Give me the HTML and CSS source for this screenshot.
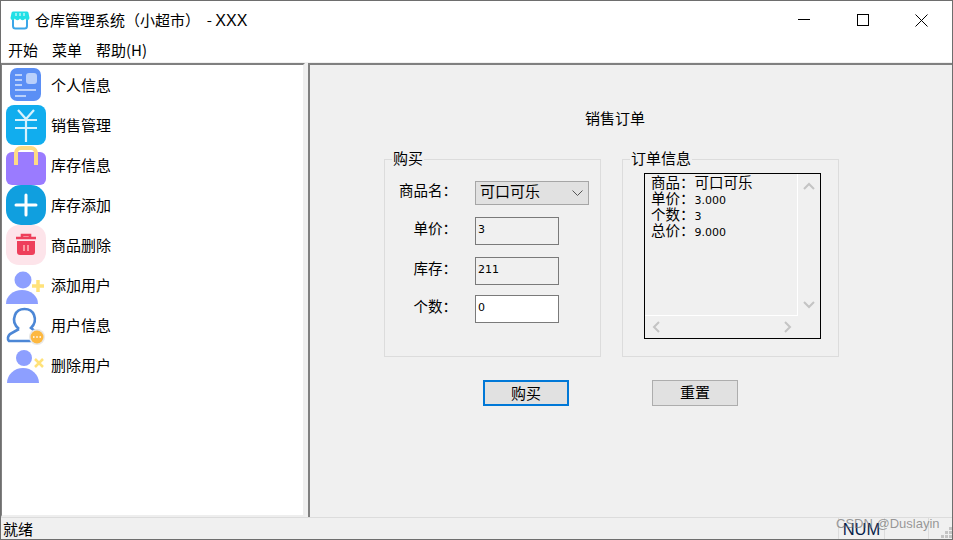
FILE: index.html
```html
<!DOCTYPE html>
<html lang="zh">
<head>
<meta charset="utf-8">
<title>仓库管理系统</title>
<link rel="stylesheet" href="styles.css">
</head>
<body>
<div class="window">
  <header class="titlebar">
    <svg class="app-icon" viewBox="0 0 20 20"><path d="M3 7v9a2.500 2.500 0 0 0 2.500 2.500h9A2.500 2.500 0 0 0 17 16V7" fill="none" stroke="#3aa6e8" stroke-width="2"/><path d="M3 1.500h14a1.500 1.500 0 0 1 1.500 1.500l1 5a2.200 2.200 0 0 1-4.300 .5 2.800 2.800 0 0 1-5.200 0 2.800 2.800 0 0 1-5.200 0A2.200 2.200 0 0 1 .5 8l1-5A1.500 1.500 0 0 1 3 1.500z" fill="#22e0e6"/><path d="M6 3v3M10 3v3M14 3v3" stroke="#fff" stroke-width="1"/></svg>
    <span class="title-text">仓库管理系统（小超市）  - <span class="title-latin">XXX</span></span>
    <div class="controls">
      <span class="ctl"><svg width="12" height="12" viewBox="0 0 12 12"><path d="M0 5.500h12" stroke="#000"/></svg></span>
      <span class="ctl"><svg width="12" height="12" viewBox="0 0 12 12"><rect x=".5" y=".5" width="11" height="11" fill="none" stroke="#000"/></svg></span>
      <span class="ctl"><svg width="13" height="13" viewBox="0 0 13 13"><path d="M.5 .5l12 12M12.500 .5l-12 12" stroke="#000"/></svg></span>
    </div>
  </header>
  <nav class="menubar"><span>开始</span><span>菜单</span><span>帮助(H)</span></nav>
  <main class="main">
    <aside class="sidebar">
      <div class="item"><svg class="ico" viewBox="0 0 40 40"><rect x="4" y="3" width="31" height="33" rx="7" fill="#5b8ff5"/><rect x="20" y="8" width="11" height="11" rx="3" fill="#b9d0fb"/><path d="M9 10h7M9 15h7M9 20h7M9 25h21M9 31h11" stroke="#b9d0fb" stroke-width="2"/></svg><span>个人信息</span></div>
      <div class="item"><svg class="ico" viewBox="0 0 40 40"><rect width="40" height="40" rx="8" fill="#11adee"/><path d="M12 5l8 9 8-9M9 15h22M9 23h22M20 14v23" fill="none" stroke="#d8f2fd" stroke-width="2.200"/></svg><span>销售管理</span></div>
      <div class="item"><svg class="ico" viewBox="0 0 40 40"><rect y="7" width="40" height="33" rx="6" fill="#9a7bff"/><path d="M10 20V8a5 5 0 0 1 5-5h10a5 5 0 0 1 5 5v12" fill="none" stroke="#fddb85" stroke-width="4"/></svg><span>库存信息</span></div>
      <div class="item"><svg class="ico" viewBox="0 0 40 40"><rect width="40" height="40" rx="15" fill="#109fdf"/><path d="M20 10v20M10 20h20" stroke="#fff" stroke-width="3" stroke-linecap="round"/></svg><span>库存添加</span></div>
      <div class="item"><svg class="ico" viewBox="0 0 40 40"><rect width="40" height="40" rx="13" fill="#fde4ea"/><path d="M11 16h18v11a3 3 0 0 1-3 3H14a3 3 0 0 1-3-3z" fill="#ee3f5b"/><path d="M10 13h20M16 12v-2h8v2" fill="none" stroke="#ee3f5b" stroke-width="2.600"/><path d="M18 20v6M22 20v6" stroke="#fbb" stroke-width="1.500"/></svg><span>商品删除</span></div>
      <div class="item"><svg class="ico" viewBox="0 0 40 40"><circle cx="17" cy="15" r="8.500" fill="#8d9fff"/><path d="M0 39a16 14 0 0 1 32 0z" fill="#8d9fff"/><path d="M32 15v12M26 21h12" stroke="#ffe27a" stroke-width="3.500"/></svg><span>添加用户</span></div>
      <div class="item"><svg class="ico" viewBox="0 0 40 40"><path d="M13 24c-5-4-6-9-4-14 3-8 16-8 19 0 2 5 1 9-3 13l5 4M13 24l-9 5c-2 2-3 5-1 7h22" fill="none" stroke="#4c87d6" stroke-width="2.600"/><circle cx="31" cy="32" r="8" fill="#e8e8e8"/><circle cx="31" cy="32" r="6.500" fill="#fdb840"/><path d="M27 32h1.500M30.250 32h1.500M33.500 32H35" stroke="#fff" stroke-width="1.500"/></svg><span>用户信息</span></div>
      <div class="item"><svg class="ico" viewBox="0 0 40 40"><circle cx="18" cy="13" r="8" fill="#8d9fff"/><path d="M1 38a16 15 0 0 1 32 0z" fill="#8d9fff"/><path d="M29 14l8 8M37 14l-8 8" stroke="#ffe27a" stroke-width="2.500"/></svg><span>删除用户</span></div>
    </aside>
    <div class="splitter"></div>
    <section class="pane">
      <div class="form">
        <h1 class="form-title">销售订单</h1>
        <div class="groups">
          <fieldset class="group buy">
            <legend>购买</legend>
            <div class="row"><label>商品名：</label><div class="combo"><span>可口可乐</span><svg width="11" height="6" viewBox="0 0 11 6"><path d="M.5 .5l5 5 5-5" fill="none" stroke="#555"/></svg></div></div>
            <div class="row"><label>单价：</label><div class="input ro">3</div></div>
            <div class="row"><label>库存：</label><div class="input ro">211</div></div>
            <div class="row last"><label>个数：</label><div class="input rw">0</div></div>
          </fieldset>
          <fieldset class="group order">
            <legend>订单信息</legend>
            <div class="listbox">
              <div class="list-text">
                <div class="first">商品：可口可乐</div>
                <div>单价：<span class="num">3.000</span></div>
                <div>个数：<span class="num">3</span></div>
                <div>总价：<span class="num">9.000</span></div>
              </div>
              <div class="vscroll">
                <svg width="12" height="8" viewBox="0 0 12 8"><path d="M1 7l5-5 5 5" fill="none" stroke="#c4c4c4" stroke-width="2"/></svg>
                <svg width="12" height="8" viewBox="0 0 12 8"><path d="M1 1l5 5 5-5" fill="none" stroke="#c4c4c4" stroke-width="2"/></svg>
              </div>
              <div class="hscroll">
                <svg width="8" height="12" viewBox="0 0 8 12"><path d="M7 1L2 6l5 5" fill="none" stroke="#c4c4c4" stroke-width="2"/></svg>
                <svg width="8" height="12" viewBox="0 0 8 12"><path d="M1 1l5 5-5 5" fill="none" stroke="#c4c4c4" stroke-width="2"/></svg>
              </div>
            </div>
          </fieldset>
        </div>
        <div class="buttons">
          <button class="btn primary">购买</button>
          <button class="btn">重置</button>
        </div>
      </div>
    </section>
  </main>
  <footer class="status">
    <span class="ready">就绪</span>
    <span class="num-pane">NUM</span>
    <span class="tail-pane"></span>
    <svg class="grip" width="11" height="11" viewBox="0 0 11 11"><path d="M8 0h3v3H8zM4 4h3v3H4zM8 4h3v3H8zM0 8h3v3H0zM4 8h3v3H4zM8 8h3v3H8z" fill="#c4c4c4"/></svg>
    <span class="watermark">CSDN @Duslayin</span>
  </footer>
</div>
</body>
</html>
```

FILE: styles.css
```css
* { box-sizing: border-box; }
html, body { margin: 0; height: 100%; }
body {
  width: 953px;
  height: 540px;
  overflow: hidden;
  font-family: "Noto Sans CJK SC", "Liberation Sans", sans-serif;
  font-size: 15px;
  color: #000;
}
.window {
  width: 953px;
  height: 540px;
  display: flex;
  flex-direction: column;
  border: 1px solid #6e6e6e;
  background: #fff;
}
.titlebar {
  height: 38px;
  flex: none;
  display: flex;
  align-items: center;
  padding-left: 9px;
}
.app-icon { width: 20px; height: 20px; margin-right: 5px; }
.title-text { font-family: "Noto Sans CJK SC", sans-serif; font-size: 15px; white-space: pre; padding-bottom: 2px; }
.title-latin { font-family: "Liberation Sans", sans-serif; font-size: 16px; }
.controls { margin-left: auto; display: flex; }
.ctl { width: 59px; height: 38px; display: flex; align-items: center; justify-content: center; transform: translateX(-1px); }
.menubar {
  height: 24px;
  flex: none;
  display: flex;
  align-items: center;
  gap: 14px;
  padding: 0 0 2px 7px;
  font-size: 15px;
  border-bottom: 1px solid #f0f0f0;
}
.main { flex: 1; min-height: 0; display: flex; background: #f0f0f0; }
.sidebar {
  width: 304px;
  flex: none;
  background: #fff;
  border-top: 2px solid #808080;
  border-left: 1px solid #808080;
  border-right: 2px solid #eee;
  border-bottom: 2px solid #eee;
  padding-left: 4px;
}
.item { height: 40px; display: flex; align-items: center; gap: 5px; font-size: 15px; }
.item span { padding-bottom: 2px; }
.ico { width: 40px; height: 40px; flex: none; overflow: visible; }
.splitter { width: 3px; flex: none; background: #f0f0f0; }
.pane {
  flex: 1;
  border-top: 2px solid #808080;
  border-left: 2px solid #808080;
  padding: 43px 0 0 74px;
  background: #f0f0f0;
}
.form { width: 455px; }
.form-title {
  margin: 0 0 23px;
  padding-left: 7px;
  height: 20px;
  line-height: 20px;
  font-size: 15px;
  font-weight: 400;
  text-align: center;
}
.groups { display: flex; gap: 21px; }
.group {
  width: 217px;
  height: 206px;
  margin: 0;
  padding: 14px 0 0;
  min-width: 0;
  border: 1px solid #dcdcdc;
}
.group legend {
  margin-left: 7px;
  padding: 0 1px;
  height: 16px;
  line-height: 14px;
  font-size: 15px;
}
.row { display: flex; align-items: center; height: 28px; margin-bottom: 12px; }
.row:first-of-type { height: 24px; }
.row.last { margin-top: -2px; margin-bottom: 0; }
.row label {
  width: 72px;
  text-align: right;
  font-family: "Noto Sans CJK TC", sans-serif;
  font-size: 14.500px;
  line-height: 20px;
  padding-bottom: 6px;
  height: 26px;
  flex: none;
}
.combo {
  width: 114px;
  height: 24px;
  margin-left: 18px;
  background: #e1e1e1;
  border: 1px solid #a6a6a6;
  display: flex;
  align-items: center;
  justify-content: space-between;
  padding: 0 5px 0 4px;
  font-size: 15px;
}
.combo span { padding-bottom: 5px; }
.input {
  width: 84px;
  height: 28px;
  margin-left: 18px;
  border: 1px solid #7a7a7a;
  padding: 0 0 4px 2px;
  display: flex;
  align-items: center;
  font-family: "DejaVu Sans", sans-serif;
  font-size: 11px;
}
.input.ro { background: #f0f0f0; }
.input.rw { background: #fff; }
.order { padding: 6px 0 0; }
.listbox {
  width: 177px;
  height: 166px;
  margin-left: 21px;
  border: 1px solid #000;
  display: grid;
  grid-template-columns: 153px 1fr;
  grid-template-rows: 142px 1fr;
  background: #f0f0f0;
}
.list-text {
  border-right: 1px solid #fff;
  border-bottom: 1px solid #fff;
  padding: 0 0 0 6px;
  font-family: "Noto Sans CJK TC", sans-serif;
  font-size: 14.500px;
  line-height: 16px;
}
.list-text > div { height: 16px; white-space: pre; }
.num { font-family: "DejaVu Sans", sans-serif; font-size: 11px; }
.vscroll {
  grid-row: 1;
  grid-column: 2;
  display: flex;
  flex-direction: column;
  justify-content: space-between;
  align-items: center;
  padding: 8px 0 7px;
}
.hscroll {
  grid-row: 2;
  grid-column: 1;
  display: flex;
  justify-content: space-between;
  align-items: center;
  padding: 0 6px 0 7px;
}
.buttons { display: flex; gap: 83px; padding: 23px 0 0 99px; }
.btn {
  width: 86px;
  height: 26px;
  padding: 0 0 5px;
  background: #e1e1e1;
  border: 1px solid #adadad;
  font: inherit;
  font-size: 15px;
  color: #000;
}
.btn.primary { border: 2px solid #0078d7; }
.status {
  position: relative;
  height: 22px;
  flex: none;
  display: flex;
  align-items: center;
  background: #f0f0f0;
  border-top: 1px solid #dcdcdc;
  font-size: 15px;
}
.ready { padding-left: 2px; width: 837px; }
.num-pane {
  width: 47px;
  height: 21px;
  text-align: center;
  line-height: 23px;
  border-left: 1px solid #dcdcdc;
  border-right: 1px solid #dcdcdc;
  font-family: "Liberation Sans", sans-serif;
  font-size: 16.500px;
  color: #06204a;
  white-space: nowrap;
  overflow: hidden;
}
.tail-pane { width: 44px; height: 21px; border-right: 1px solid #dcdcdc; }
.grip { position: absolute; right: 0; bottom: 1px; }
.watermark {
  position: absolute;
  left: 835px;
  top: -2px;
  font-family: "Liberation Sans", sans-serif;
  font-size: 13px;
  color: rgba(120, 120, 120, .75);
  white-space: nowrap;
}
```
